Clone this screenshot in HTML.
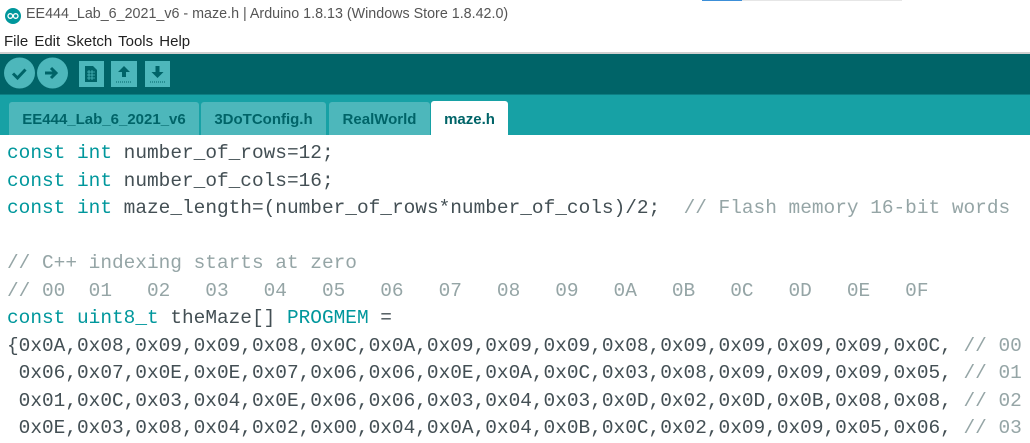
<!DOCTYPE html>
<html><head><style>
body{margin:0;width:1030px;height:439px;overflow:hidden;background:#fff;font-family:"Liberation Sans",sans-serif;position:relative}
.a{position:absolute}
.title{left:26px;top:6px;font-size:14.3px;color:#555;white-space:nowrap}
.menu{left:4px;top:33px;font-size:15px;color:#222;white-space:nowrap;word-spacing:2px}
.tab{position:absolute;top:102px;height:33px;background:#4db7bb;color:#006468;font-size:15px;font-weight:bold;text-align:center;line-height:36px;border-radius:3px 3px 0 0}
.code{left:7px;top:140px;font-family:"Liberation Mono",monospace;font-size:19.45px;line-height:27.5px;color:#434f54;white-space:pre}
.k{color:#00979c}.c{color:#95a5a6}
</style></head><body>
<svg class="a" style="left:5px;top:8px" width="16" height="16"><circle cx="8" cy="8" r="8" fill="#00979c"/><circle cx="5.3" cy="8" r="2.3" fill="none" stroke="#fff" stroke-width="1.3"/><circle cx="10.7" cy="8" r="2.3" fill="none" stroke="#fff" stroke-width="1.3"/></svg>
<div class="a title">EE444_Lab_6_2021_v6 - maze.h | Arduino 1.8.13 (Windows Store 1.8.42.0)</div>
<div class="a" style="left:702px;top:0;width:200px;height:1px;background:#e6e6e6"></div>
<div class="a" style="left:702px;top:0;width:40px;height:1px;background:#3c8fd8"></div>
<div class="a menu">File Edit Sketch Tools Help</div>
<div class="a" style="left:0;top:52px;width:1030px;height:2px;background:#d0d0d0"></div>
<div class="a" style="left:0;top:54px;width:1030px;height:40px;background:#006468"></div>
<div class="a" style="left:0;top:94px;width:1030px;height:41px;background:#17a1a5"></div>
<div class="a" style="left:0;top:94px;width:1030px;height:1px;background:#0d7f84"></div>
<svg class="a" style="left:0;top:54px" width="180" height="40">
<circle cx="19.5" cy="19" r="15.5" fill="#4db7bb"/>
<path d="M13 19.5l4.5 4.5 8-8.5" stroke="#006468" stroke-width="3" fill="none"/>
<circle cx="52.5" cy="19" r="15.5" fill="#4db7bb"/>
<path d="M45 19h10M51 14l5 5-5 5" stroke="#006468" stroke-width="3" fill="none"/>
<rect x="79" y="7" width="25" height="26" fill="#4db7bb"/>
<path d="M85 12h8l4 4v12h-12z" fill="#006468"/><path d="M87 18h8M87 21h8M87 24h8M89 16v10M92 16v10" stroke="#4db7bb" stroke-width="0.8"/>
<rect x="111" y="7" width="26" height="26" fill="#4db7bb"/>
<path d="M124 12l-6 6h4v5h4v-5h4z" fill="#006468"/><path d="M116 28h16" stroke="#006468" stroke-dasharray="1 1"/>
<rect x="145" y="7" width="25" height="26" fill="#4db7bb"/>
<path d="M157.5 24l-6-6h4v-6h4v6h4z" fill="#006468"/><path d="M150 28h16" stroke="#006468" stroke-dasharray="1 1"/>
</svg>
<div class="tab" style="left:9px;width:190px">EE444_Lab_6_2021_v6</div>
<div class="tab" style="left:201px;width:125px">3DoTConfig.h</div>
<div class="tab" style="left:329px;width:101px">RealWorld</div>
<div class="tab" style="left:431px;top:101px;height:34px;width:77px;background:#fff;color:#006468;line-height:38px">maze.h</div>
<div class="a code"><span class="k">const</span> <span class="k">int</span> number_of_rows=12;
<span class="k">const</span> <span class="k">int</span> number_of_cols=16;
<span class="k">const</span> <span class="k">int</span> maze_length=(number_of_rows*number_of_cols)/2;  <span class="c">// Flash memory 16-bit words</span>

<span class="c">// C++ indexing starts at zero</span>
<span class="c">// 00  01   02   03   04   05   06   07   08   09   0A   0B   0C   0D   0E   0F</span>
<span class="k">const</span> <span class="k">uint8_t</span> theMaze[] <span class="k">PROGMEM</span> =
{0x0A,0x08,0x09,0x09,0x08,0x0C,0x0A,0x09,0x09,0x09,0x08,0x09,0x09,0x09,0x09,0x0C, <span class="c">// 00</span>
 0x06,0x07,0x0E,0x0E,0x07,0x06,0x06,0x0E,0x0A,0x0C,0x03,0x08,0x09,0x09,0x09,0x05, <span class="c">// 01</span>
 0x01,0x0C,0x03,0x04,0x0E,0x06,0x06,0x03,0x04,0x03,0x0D,0x02,0x0D,0x0B,0x08,0x08, <span class="c">// 02</span>
 0x0E,0x03,0x08,0x04,0x02,0x00,0x04,0x0A,0x04,0x0B,0x0C,0x02,0x09,0x09,0x05,0x06, <span class="c">// 03</span></div>
</body></html>
